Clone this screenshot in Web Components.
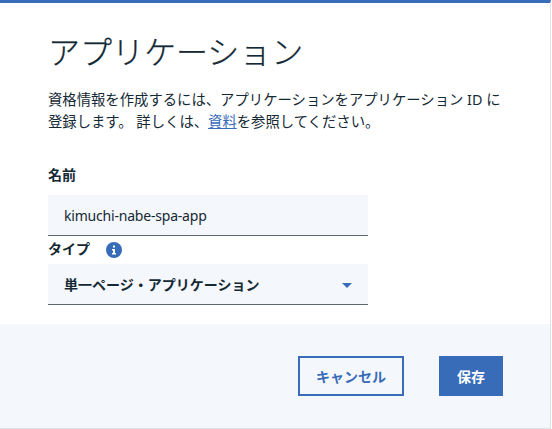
<!DOCTYPE html>
<html lang="ja">
<head>
<meta charset="utf-8">
<style>
  html, body { margin: 0; background: #fff; }
  body { font-family: "Noto Sans", "Noto Sans CJK JP", sans-serif; color: #152935; }
</style>
</head>
<body>
<template id="app-modal">
  <style>
    :host { width: 551px; height: 429px; box-sizing: border-box; border-top: 3px solid #386cb9; border-right: 1px solid #dfe3e6; border-bottom: 1px solid #dfe3e6; background: #fff; display: flex; flex-direction: column; }
    .body { flex: 1; padding: 0 0 0 48px; }
    h1 { margin: 29px 0 0; font-size: 32px; line-height: 40px; font-weight: 300; -webkit-text-stroke: 0.25px #152935; height: 40px; }
    p { margin: 17px 0 0; font-size: 14.35px; line-height: 22px; width: 470px; }
    .footer { height: 104px; flex: none; background: #f4f7fb; display: flex; justify-content: flex-end; align-items: flex-start; gap: 35px; padding: 32px 47px 0 0; box-sizing: border-box; }
    .form { margin-top: 32px; width: 320px; }
  </style>
  <div class="body">
    <h1><slot name="title"></slot></h1>
    <p><slot name="text"></slot></p>
    <div class="form"><slot name="form"></slot></div>
  </div>
  <div class="footer"><slot name="actions"></slot></div>
</template>

<template id="form-field">
  <style>
    :host { display: block; }
    .label { display: flex; align-items: center; gap: 16px; font-size: 14px; font-weight: 700; line-height: 20px; height: 20px; }
    .box { margin-top: var(--box-gap, 0); height: 40px; background: #f4f7fb; border-bottom: 1px solid #5a6872; display: flex; align-items: center; font-size: 14px; letter-spacing: -0.2px; padding: 0 16px; }
    :host([select]) .box { font-weight: 700; letter-spacing: 0; }
    :host([select]) .value { flex: 1; }
  </style>
  <div class="label"><span id="label"></span><slot name="hint"></slot></div>
  <div class="box"><span class="value"><slot></slot></span><slot name="end"></slot></div>
</template>

<template id="action-button">
  <style>
    :host { display: inline-flex; align-items: center; justify-content: center; box-sizing: border-box; height: 40px; font-size: 14px; font-weight: 700; border: 2px solid #386cb9; color: #386cb9; background: transparent; padding: 0 16px; }
    :host([primary]) { background: #386cb9; color: #fff; }
  </style>
  <slot></slot>
</template>

<template id="info-icon">
  <style>
    :host { display: inline-block; width: 16px; height: 16px; line-height: 0; margin-top: 2px; }
  </style>
  <svg width="16" height="16" viewBox="0 0 16 16"><circle cx="8" cy="8" r="8" fill="#386cb9"/><path fill="#fff" d="M7 3.500h2v2H7zM6 7h3v4h1v1.500H6V11h1V8.400H6z"/></svg>
</template>

<template id="doc-link"><style>:host { display: inline; color: #386cb9; text-decoration: underline; }</style><slot></slot></template>

<app-modal>
  <span slot="title">アプリケーション</span>
  <span slot="text">資格情報を作成するには、アプリケーションをアプリケーション ID に<br>登録します。 詳しくは、<doc-link>資料</doc-link>を参照してください。</span>
  <div slot="form">
    <form-field label="名前" style="--box-gap:10px">kimuchi-nabe-spa-app</form-field>
    <form-field label="タイプ" select style="--box-gap:5px;margin-top:3px">
      <info-icon slot="hint"></info-icon>
      単一ページ・アプリケーション
      <svg slot="end" style="margin-top:3px" width="10" height="5" viewBox="0 0 10 5"><path fill="#386cb9" d="M0 0h10L5 5z"/></svg>
    </form-field>
  </div>
  <action-button slot="actions">キャンセル</action-button>
  <action-button slot="actions" primary>保存</action-button>
</app-modal>

<script>
  class Stamped extends HTMLElement {
    constructor(id) {
      super();
      this.attachShadow({ mode: 'open' }).appendChild(document.getElementById(id).content.cloneNode(true));
    }
  }
  class AppModal extends Stamped {
    constructor() { super('app-modal'); }
  }
  class FormField extends Stamped {
    constructor() { super('form-field'); }
    connectedCallback() {
      this.shadowRoot.getElementById('label').textContent = this.getAttribute('label');
    }
  }
  class ActionButton extends Stamped {
    constructor() { super('action-button'); }
  }
  class InfoIcon extends Stamped {
    constructor() { super('info-icon'); }
  }
  class DocLink extends Stamped {
    constructor() { super('doc-link'); }
  }
  customElements.define('app-modal', AppModal);
  customElements.define('form-field', FormField);
  customElements.define('action-button', ActionButton);
  customElements.define('info-icon', InfoIcon);
  customElements.define('doc-link', DocLink);
</script>
</body>
</html>
